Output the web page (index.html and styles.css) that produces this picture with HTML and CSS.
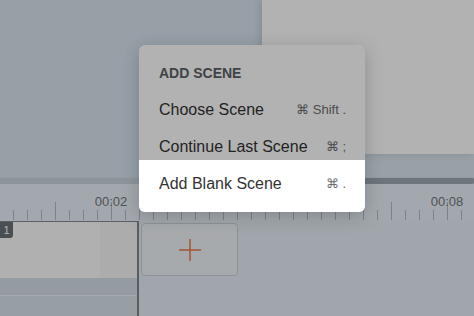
FILE: index.html
```html
<!DOCTYPE html>
<html>
<head>
<meta charset="utf-8">
<link rel="stylesheet" href="styles.css">
</head>
<body>
<div class="app">
  <div class="stage">
    <div class="canvas"></div>
    <div class="side">
      <div class="preview"></div>
    </div>
  </div>
  <div class="timeline">
    <div class="scrollbar"><div class="thumb"></div></div>
    <div class="ruler">
      <span class="label">00:02</span>
      <span class="label">00:04</span>
      <span class="label">00:06</span>
      <span class="label">00:08</span>
    </div>
    <div class="tracks">
      <div class="scene">
        <div class="clip"><span class="badge">1</span></div>
        <div class="sub sub-a"></div>
        <div class="sub sub-b"></div>
      </div>
      <div class="track-rest">
        <button class="add-btn" aria-label="Add scene">
          <svg width="24" height="24" viewBox="0 0 24 24"><path d="M12 1v22M1 12h22" stroke="#ea7845" stroke-width="1.5" fill="none"/></svg>
        </button>
      </div>
    </div>
  </div>

  <div class="menu">
    <div class="menu-title">ADD SCENE</div>
    <div class="menu-item"><span>Choose Scene</span><span class="kbd">⌘ Shift .</span></div>
    <div class="menu-item"><span>Continue Last Scene</span><span class="kbd">⌘ ;</span></div>
    <div class="menu-item spotlight"><span>Add Blank Scene</span><span class="kbd">⌘ .</span></div>
  </div>
</div>
</body>
</html>
```

FILE: styles.css
```css
* { box-sizing: border-box; }
html, body { margin: 0; padding: 0; }
body {
  width: 474px;
  height: 316px;
  overflow: hidden;
  font-family: "Liberation Sans", Arial, sans-serif;
}
.app {
  position: relative;
  width: 474px;
  height: 316px;
  overflow: hidden;
  display: flex;
  flex-direction: column;
  background: #e7eef6;
}
.stage {
  height: 177px;
  display: flex;
  background: #dce6f0;
}
.canvas {
  width: 262px;
  background: #d9e5f0;
}
.side {
  flex: 1;
  display: flex;
  flex-direction: column;
}
.preview {
  height: 154px;
  background: #ffffff;
  box-shadow: -2px 0 8px rgba(60, 70, 80, 0.18);
}
.timeline {
  flex: 1;
  display: flex;
  flex-direction: column;
}
.scrollbar {
  height: 7px;
  background: #cbd5de;
  border-top: 1px solid #d6dfe8;
  display: flex;
  justify-content: flex-end;
}
.thumb {
  width: 175px;
  background: #9ea8b0;
  border-radius: 2px;
}
.ruler {
  height: 37px;
  overflow: hidden;
  background-color: #eaf1f9;
  background-image:
    repeating-linear-gradient(to right, transparent 0 55px, #b3bbc4 55px 56px),
    repeating-linear-gradient(to right, transparent 0 13px, #b3bbc4 13px 14px);
  background-size: 100% 18px, 100% 10px;
  background-position: 0 18px, 0 26px;
  background-repeat: no-repeat;
  display: flex;
  padding-left: 55px;
  padding-top: 11px;
}
.label {
  flex: 0 0 112px;
  text-align: center;
  font-size: 13px;
  line-height: 14px;
  color: #6f7880;
}
.tracks {
  flex: 1;
  display: flex;
}
.scene {
  width: 139px;
  border-top: 1px solid #838a90;
  border-right: 2px solid #7f868c;
  display: flex;
  flex-direction: column;
}
.clip {
  position: relative;
  height: 56px;
  background: linear-gradient(to right, #fdfdfd 0 100px, #f6f6f6 100px);
}
.badge {
  position: absolute;
  left: 0;
  top: 0;
  width: 13px;
  height: 16px;
  background: #6a7279;
  color: #ffffff;
  font-size: 11px;
  line-height: 16px;
  text-align: center;
  border-bottom-right-radius: 3px;
}
.sub-a {
  height: 18px;
  background: #d6dfe8;
  border-bottom: 1px solid #eef4fa;
}
.sub-b {
  flex: 1;
  background: #d9e2eb;
}
.track-rest {
  flex: 1;
  padding: 2px 0 0 2px;
}
.add-btn {
  width: 97px;
  height: 53px;
  background: #f0f4f8;
  border: 1px solid #cad1d8;
  border-radius: 4px;
  display: flex;
  align-items: center;
  justify-content: center;
  padding: 0;
}
.add-btn svg { display: block; }

.menu {
  position: absolute;
  left: 139px;
  top: 45px;
  width: 226px;
  background: #ffffff;
  border-radius: 6px;
  box-shadow: 0 4px 18px rgba(40, 50, 60, 0.25);
  z-index: 10;
}
.menu-title {
  height: 46px;
  padding: 19px 20px 0;
  font-size: 14px;
  line-height: 18px;
  font-weight: bold;
  color: #5b6167;
}
.menu-item {
  height: 37px;
  display: flex;
  align-items: center;
  justify-content: space-between;
  padding: 0 19px 0 20px;
  font-size: 16px;
  color: #333333;
}
.kbd {
  font-size: 13px;
  color: #6b6d70;
}
.spotlight {
  position: relative;
  margin-top: -5px;
  height: 52px;
  padding-top: 5px;
  padding-bottom: 10px;
  background: #ffffff;
  border-radius: 0 0 6px 6px;
  box-shadow: 0 0 0 1200px rgba(0, 0, 0, 0.3);
}
```
